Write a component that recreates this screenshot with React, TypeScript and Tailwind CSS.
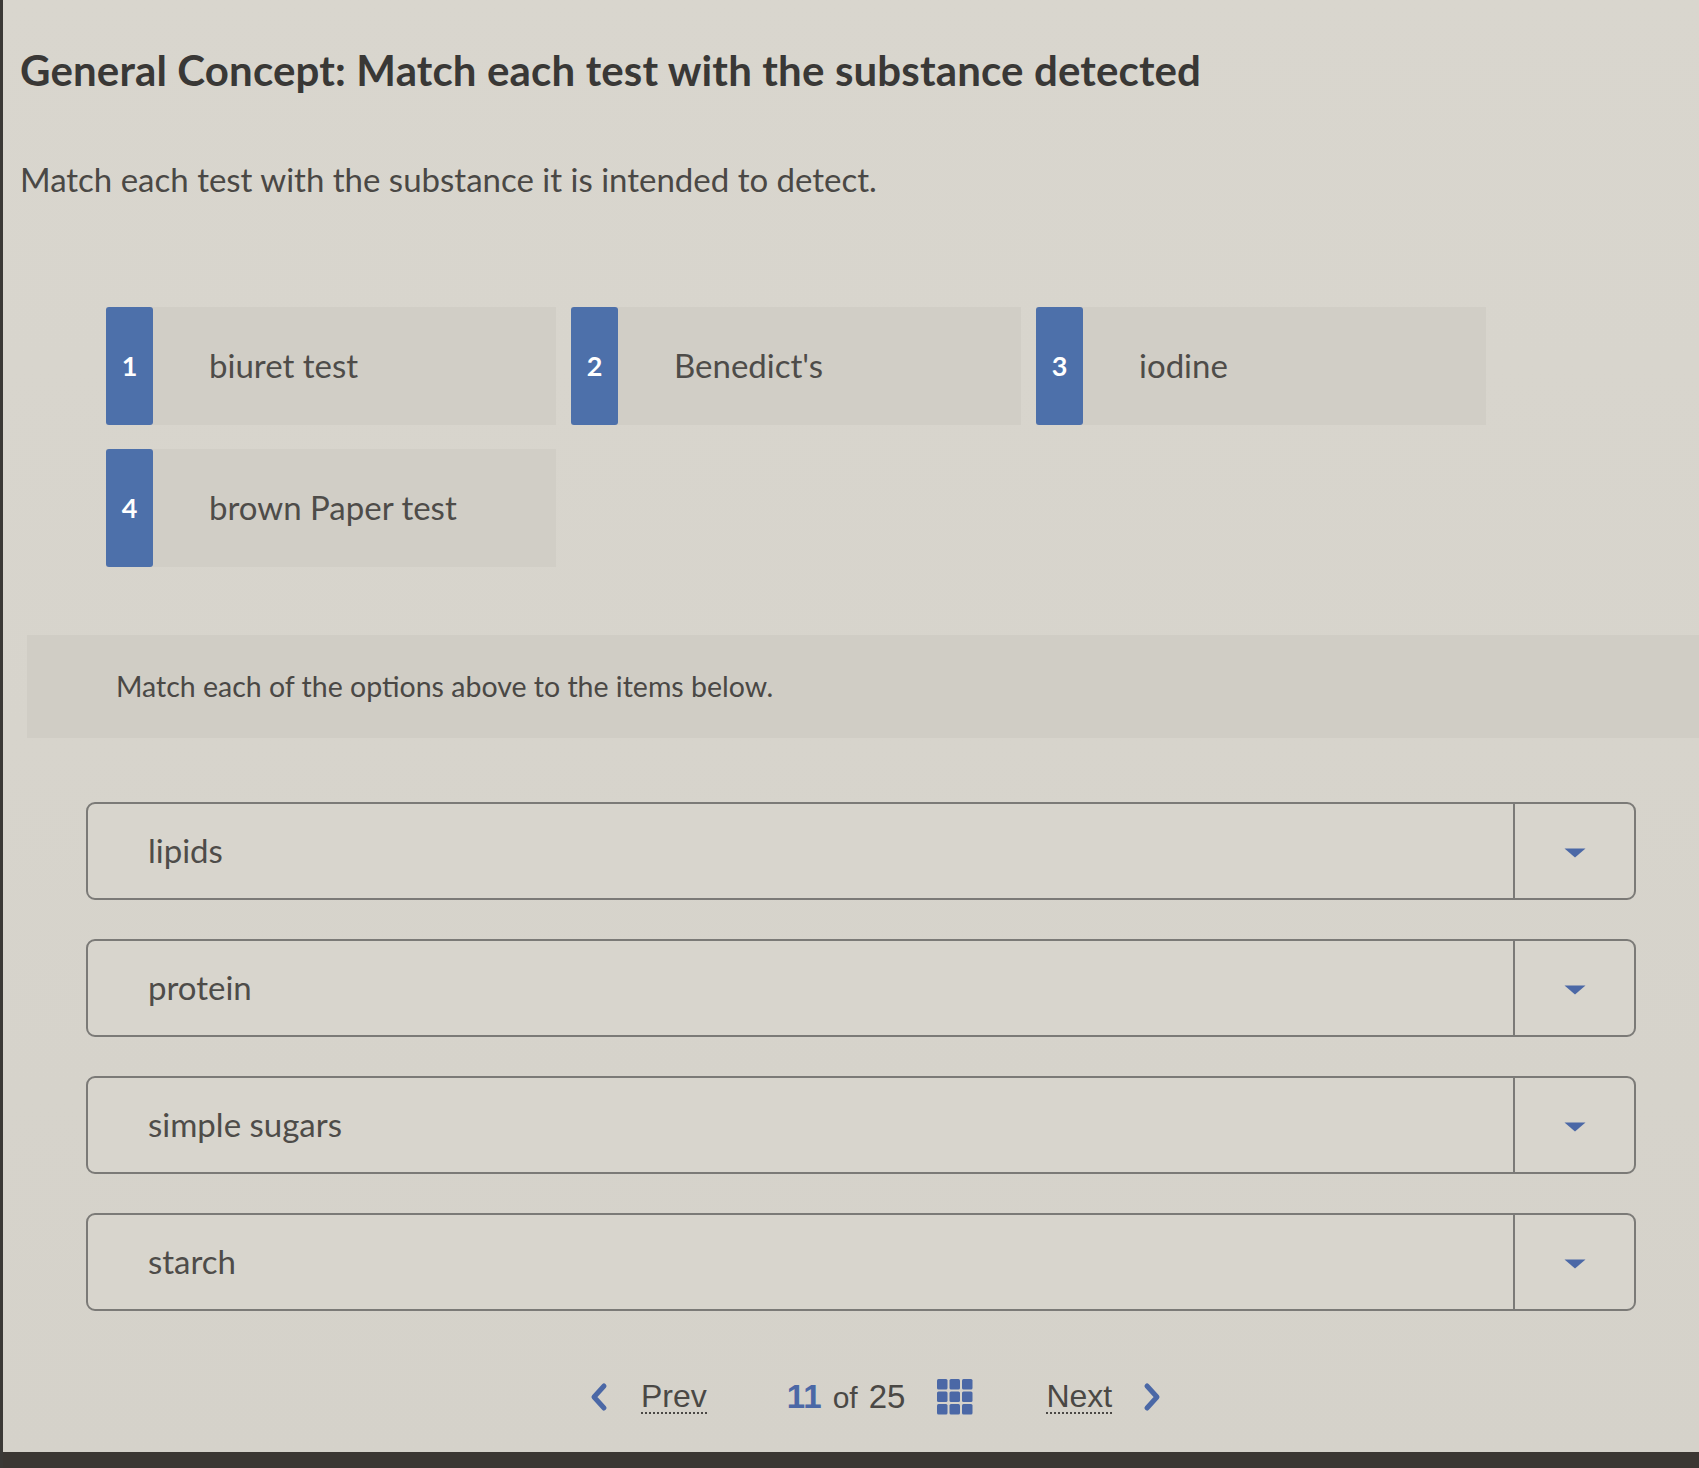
import React from "react";

const tilesRow1 = [
  { n: "1", label: "biuret test" },
  { n: "2", label: "Benedict's" },
  { n: "3", label: "iodine" },
];

function Tile({ n, label }: { n: string; label: string }) {
  return (
    <div className="flex w-[450px] h-[118px] bg-[#d1cec6] items-stretch">
      <div className="w-[47px] bg-[#4d70aa] rounded-[3px] flex items-center justify-center text-white font-bold text-[27px] font-['Lato',sans-serif]">
        {n}
      </div>
      <div className="flex items-center pl-[56px] text-[33px] text-[#4e4c49] font-['Lato',sans-serif]">
        {label}
      </div>
    </div>
  );
}

function Dropdown({ label }: { label: string }) {
  return (
    <div className="flex w-[1550px] h-[98px] border-2 border-[#7b7a77] rounded-[9px] bg-[#d8d5cd]">
      <div className="flex-1 flex items-center pl-[60px] text-[33px] text-[#4e4c49] font-['Lato',sans-serif]">
        {label}
      </div>
      <div className="w-[121px] border-l-2 border-[#7b7a77] flex items-center justify-center pt-[4px]">
        <svg width="22" height="10" viewBox="0 0 22 10">
          <path d="M0.5 0.5 L21.5 0.5 L11 9.5 Z" fill="#4b68a6" />
        </svg>
      </div>
    </div>
  );
}

export default function App() {
  return (
    <div className="w-[1699px] h-[1468px] bg-gradient-to-b from-[#d9d6ce] to-[#d5d2ca] border-l-[3px] border-[#3b3936] flex flex-col overflow-hidden">
      <div className="pl-[17px] pt-[48px] h-[95px] text-[42px] leading-[44px] font-bold text-[#393836] font-['Lato',sans-serif] tracking-[0.15px]">
        General Concept: Match each test with the substance detected
      </div>
      <div className="pl-[17px] mt-[64px] text-[33px] leading-[40px] text-[#4a4845] font-['Lato',sans-serif]">
        Match each test with the substance it is intended to detect.
      </div>
      <div className="pl-[103px] mt-[108px] flex flex-col gap-[24px]">
        <div className="flex gap-[15px]">
          {tilesRow1.map((t) => (
            <Tile key={t.n} n={t.n} label={t.label} />
          ))}
        </div>
        <div className="flex">
          <Tile n="4" label="brown Paper test" />
        </div>
      </div>
      <div className="mt-[68px] ml-[24px] flex flex-col">
        <div className="h-[103px] bg-[#d0cdc5] flex items-center pl-[89px] text-[28.5px] text-[#4a4845] font-['Lato',sans-serif]">
          Match each of the options above to the items below.
        </div>
        <div className="pl-[59px] pt-[64px] flex flex-col gap-[39px]">
          {["lipids", "protein", "simple sugars", "starch"].map((l) => (
            <Dropdown key={l} label={l} />
          ))}
        </div>
      </div>
      <div className="mt-[56px] h-[60px] flex items-center pl-[585px] font-['Liberation_Sans',Arial,sans-serif] text-[32px] text-[#4a4845]">
        <svg width="22" height="30" viewBox="0 0 22 30">
          <path d="M16 4 L6 15 L16 26" stroke="#4b68a6" strokeWidth="5" fill="none" strokeLinecap="round" strokeLinejoin="round" />
        </svg>
        <span className="ml-[31px] border-b-2 border-dotted border-[#4a4845] leading-[32px]">Prev</span>
        <span className="ml-[80px] font-bold text-[#4b68a6] text-[33px]">11</span>
        <span className="ml-[11px] text-[30px]">of</span>
        <span className="ml-[11px] text-[33px]">25</span>
        <svg width="36" height="36" viewBox="0 0 36 36" className="ml-[32px]">
          {[0, 1, 2].map((r) =>
            [0, 1, 2].map((c) => (
              <rect key={`${r}-${c}`} x={c * 12.5} y={r * 12.5} width="10.5" height="10.5" rx="1.5" fill="#4b68a6" />
            ))
          )}
        </svg>
        <span className="ml-[73px] border-b-2 border-dotted border-[#4a4845] leading-[32px]">Next</span>
        <svg width="22" height="30" viewBox="0 0 22 30" className="ml-[29px]">
          <path d="M6 4 L16 15 L6 26" stroke="#4b68a6" strokeWidth="5" fill="none" strokeLinecap="round" strokeLinejoin="round" />
        </svg>
      </div>
      <div className="mt-auto h-[16px] bg-[#3b3733]" />
    </div>
  );
}
